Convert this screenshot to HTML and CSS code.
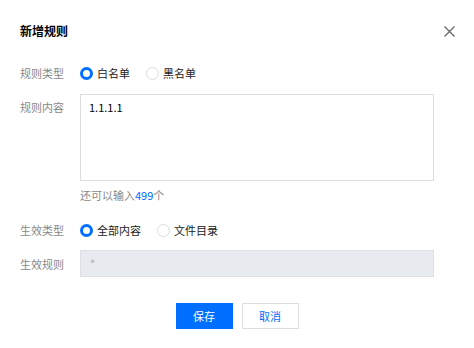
FILE: index.html
```html
<!DOCTYPE html>
<html lang="zh-CN">
<head>
<meta charset="utf-8">
<title>新增规则</title>
<link rel="stylesheet" href="styles.css">
</head>
<body>
<div class="dialog">
  <div class="header">
    <h1 class="title">新增规则</h1>
    <button class="close" aria-label="关闭">
      <svg width="11" height="11" viewBox="0 0 11 11"><path d="M0.5 0.5L10.5 10.5M10.5 0.5L0.5 10.5" stroke="#666" stroke-width="1.3" fill="none"/></svg>
    </button>
  </div>
  <div class="form">
    <div class="row row-radio">
      <div class="label">规则类型</div>
      <div class="control radios">
        <label class="radio"><span class="dot checked"></span><span>白名单</span></label>
        <label class="radio"><span class="dot"></span><span>黑名单</span></label>
      </div>
    </div>
    <div class="row row-area">
      <div class="label label-top">规则内容</div>
      <div class="control">
        <div class="textarea">1.1.1.1</div>
        <div class="help">还可以输入<span class="num">499</span>个</div>
      </div>
    </div>
    <div class="row row-radio row-gap">
      <div class="label">生效类型</div>
      <div class="control radios">
        <label class="radio"><span class="dot checked"></span><span>全部内容</span></label>
        <label class="radio"><span class="dot"></span><span>文件目录</span></label>
      </div>
    </div>
    <div class="row row-input">
      <div class="label">生效规则</div>
      <div class="control">
        <div class="input disabled">*</div>
      </div>
    </div>
  </div>
  <div class="footer">
    <button class="btn primary">保存</button>
    <button class="btn">取消</button>
  </div>
</div>
</body>
</html>
```

FILE: styles.css
```css
* { box-sizing: border-box; }
html, body { margin: 0; padding: 0; background: #fff; }
body {
  font-family: "Noto Sans CJK SC", "Noto Sans", "Liberation Sans", sans-serif;
  font-size: 11px;
  color: #222;
  width: 474px;
  height: 348px;
  overflow: hidden;
}
.dialog { padding: 24px 19px 0 20px; }
.header {
  display: flex;
  justify-content: space-between;
  align-items: center;
  height: 14px;
}
.title {
  margin: 0;
  font-size: 12px;
  font-weight: 700;
  line-height: 14px;
  color: #000;
}
.close {
  border: 0;
  background: none;
  padding: 0;
  width: 11px;
  height: 11px;
  display: flex;
  margin-top: 1px;
}
.form { margin-top: 23px; }
.row { display: flex; }
.label {
  width: 60px;
  flex: none;
  color: #888;
  line-height: 16px;
}
.control { width: 354px; flex: none; }
.row-radio { height: 24px; align-items: center; }
.radios { display: flex; align-items: center; gap: 16px; }
.radio { display: flex; align-items: center; gap: 4px; color: #222; line-height: 16px; }
.dot {
  width: 13px;
  height: 13px;
  border-radius: 50%;
  border: 1px solid #ddd;
  background: #fff;
  display: inline-block;
}
.dot.checked { border: 3.5px solid #006eff; }
.row-area { margin-top: 9px; }
.label-top { padding-top: 5px; }
.textarea {
  height: 87px;
  border: 1px solid #ddd;
  padding: 4px 8px;
  line-height: 16px;
  color: #000;
}
.help {
  margin-top: 6px;
  line-height: 16px;
  color: #888;
}
.num { color: #006eff; }
.row-gap { margin-top: 15px; }
.row-input { margin-top: 8px; align-items: center; }
.input {
  height: 27px;
  padding: 0 9px;
  line-height: 25px;
  border: 1px solid #dcdfe5;
}
.input.disabled { background: #e7eaef; color: #aaa; }
.footer {
  margin-top: 26px;
  display: flex;
  justify-content: center;
  gap: 9px;
  margin-left: -1px;
}
.btn {
  width: 57px;
  height: 26px;
  border: 1px solid #ddd;
  background: #fff;
  color: #006eff;
  font-family: inherit;
  font-size: 11px;
  padding: 0;
  line-height: 24px;
}
.btn.primary {
  background: #006eff;
  border-color: #006eff;
  color: #fff;
}
```
